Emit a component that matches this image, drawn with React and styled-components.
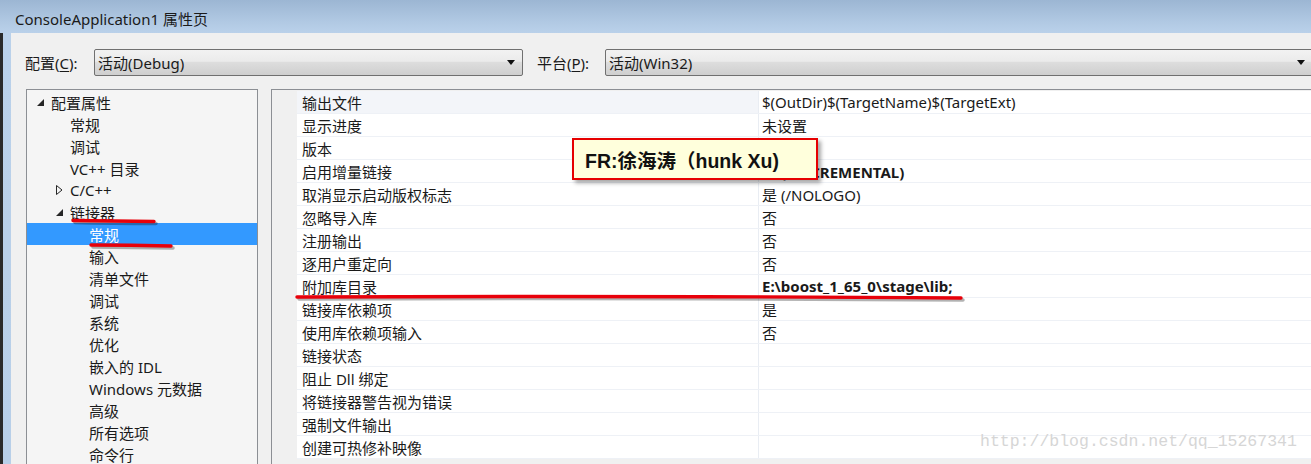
import React from "react";
import styled, { createGlobalStyle } from "styled-components";

const GlobalStyle = createGlobalStyle`
  html, body {
    margin: 0;
    padding: 0;
    background: #f0f0f0;
    overflow: hidden;
  }
  body {
    font-family: "Noto Sans", "Noto Sans CJK SC", sans-serif;
    font-size: 15px;
    color: #1a1a1a;
  }
`;

const treeItems = [
  { label: "配置属性", level: 0, arrow: "open" },
  { label: "常规", level: 1 },
  { label: "调试", level: 1 },
  { label: "VC++ 目录", level: 1 },
  { label: "C/C++", level: 1, arrow: "closed" },
  { label: "链接器", level: 1, arrow: "open" },
  { label: "常规", level: 2, selected: true },
  { label: "输入", level: 2 },
  { label: "清单文件", level: 2 },
  { label: "调试", level: 2 },
  { label: "系统", level: 2 },
  { label: "优化", level: 2 },
  { label: "嵌入的 IDL", level: 2 },
  { label: "Windows 元数据", level: 2 },
  { label: "高级", level: 2 },
  { label: "所有选项", level: 2 },
  { label: "命令行", level: 2 },
];

const props = [
  { name: "输出文件", value: "$(OutDir)$(TargetName)$(TargetExt)", active: true },
  { name: "显示进度", value: "未设置" },
  { name: "版本", value: "" },
  { name: "启用增量链接", value: "是 (/INCREMENTAL)", bold: true },
  { name: "取消显示启动版权标志", value: "是 (/NOLOGO)" },
  { name: "忽略导入库", value: "否" },
  { name: "注册输出", value: "否" },
  { name: "逐用户重定向", value: "否" },
  { name: "附加库目录", value: "E:\\boost_1_65_0\\stage\\lib;", bold: true },
  { name: "链接库依赖项", value: "是" },
  { name: "使用库依赖项输入", value: "否" },
  { name: "链接状态", value: "" },
  { name: "阻止 Dll 绑定", value: "" },
  { name: "将链接器警告视为错误", value: "" },
  { name: "强制文件输出", value: "" },
  { name: "创建可热修补映像", value: "" },
];

const Page = styled.div`
  position: relative;
  width: 1311px;
  height: 464px;
  overflow: hidden;
  display: flex;
  flex-direction: column;
`;

const TitleBar = styled.div`
  height: 33px;
  flex: none;
  display: flex;
  align-items: center;
  padding-left: 15px;
  padding-top: 4px;
  box-sizing: border-box;
  background: linear-gradient(#9cb6d3, #b2cae4 70%, #bad1ea);
  font-size: 15px;
  color: #1a1a1a;
`;

const Frame = styled.div`
  flex: 1;
  display: flex;
  min-height: 0;
`;

const FrameEdge = styled.div`
  width: 8px;
  flex: none;
  border-left: 3px solid #2a2a2a;
  background: linear-gradient(#bad1ea, #b8cfe8);
`;

const Client = styled.div`
  flex: 1;
  background: #f0f0f0;
  display: flex;
  flex-direction: column;
  padding: 16px 0 0 14px;
  min-width: 0;
`;

const ConfigRow = styled.div`
  display: flex;
  align-items: center;
  height: 27px;
`;

const Label = styled.span`
  width: ${(p) => p.$w}px;
  flex: none;
  u {
    text-decoration: underline;
    text-underline-offset: 2px;
  }
`;

const Combo = styled.div`
  width: ${(p) => p.$w}px;
  flex: none;
  height: 27px;
  box-sizing: border-box;
  border: 1px solid #707070;
  border-radius: 2px;
  background: linear-gradient(#f2f2f2, #ebebeb 45%, #dddddd 50%, #cfcfcf);
  display: flex;
  align-items: center;
  padding: 0 7px 0 3px;
  margin-right: ${(p) => p.$mr || 0}px;
`;

const ComboText = styled.span`
  flex: 1;
`;

const Arrow = styled.span`
  width: 0;
  height: 0;
  border-left: 4px solid transparent;
  border-right: 4px solid transparent;
  border-top: 5px solid #111;
`;

const Panels = styled.div`
  display: flex;
  gap: 13px;
  margin-top: 13px;
  margin-left: 1px;
  flex: 1;
  min-height: 0;
`;

const Tree = styled.div`
  width: 232px;
  flex: none;
  box-sizing: border-box;
  border: 1px solid #8c8f94;
  border-bottom: none;
  background: #f5f5f5;
  padding-top: 1px;
`;

const TreeRow = styled.div`
  height: 22px;
  display: flex;
  align-items: center;
  padding-left: ${(p) => 10 + p.$level * 19}px;
  background: ${(p) => (p.$selected ? "#3399ff" : "transparent")};
  color: ${(p) => (p.$selected ? "#fff" : "#1a1a1a")};
`;

const Expander = styled.span`
  width: 14px;
  flex: none;
  display: flex;
  align-items: center;
`;

const Grid = styled.div`
  flex: 1;
  min-width: 0;
  box-sizing: border-box;
  border: 1px solid #8c8f94;
  border-bottom: none;
  border-right: none;
  background: #f0f0f0;
  padding-left: 25px;
  padding-top: 1px;
`;

const PropRow = styled.div`
  display: grid;
  grid-template-columns: 462px 1fr;
  height: 23px;
  box-sizing: border-box;
  border-bottom: 1px solid #eef1f6;
  background: #fff;
`;

const NameCell = styled.div`
  padding-left: 5px;
  display: flex;
  align-items: center;
  border-right: 1px solid #e9edf3;
  background: ${(p) => (p.$active ? "#f3f5f9" : "#fff")};
  white-space: nowrap;
`;

const ValueCell = styled.div`
  padding-left: 3px;
  display: flex;
  align-items: center;
  font-weight: ${(p) => (p.$bold ? 700 : 400)};
  white-space: nowrap;
`;

const Note = styled.div`
  position: absolute;
  left: 572px;
  top: 138px;
  width: 246px;
  height: 42px;
  box-sizing: border-box;
  border: 2px solid #e60000;
  background: #ffffdc;
  box-shadow: 3px 3px 4px rgba(0, 0, 0, 0.35);
  display: flex;
  align-items: center;
  padding-left: 11px;
  font-family: "Liberation Sans", "Noto Sans CJK SC", sans-serif;
  font-weight: 700;
  font-size: 19.5px;
  color: #111;
  white-space: nowrap;
`;

const Ink = styled.svg`
  position: absolute;
  left: 0;
  top: 0;
  pointer-events: none;
`;

const Watermark = styled.div`
  position: absolute;
  left: 980px;
  top: 432px;
  font-family: "Liberation Mono", monospace;
  font-size: 16.5px;
  color: #d6d6d6;
`;

const OpenGlyph = () => (
  <svg width="7" height="7" viewBox="0 0 7 7">
    <polygon points="7,0 7,7 0,7" fill="#262626" />
  </svg>
);

const ClosedGlyph = () => (
  <svg width="7" height="10" viewBox="0 0 7 10">
    <polygon points="0.5,0.5 6,5 0.5,9.5" fill="none" stroke="#262626" strokeWidth="1" />
  </svg>
);

const App = () => {
  return (
    <>
      <GlobalStyle />
      <Page>
        <TitleBar>ConsoleApplication1 属性页</TitleBar>
        <Frame>
          <FrameEdge />
          <Client>
            <ConfigRow>
              <Label $w={69}>
                配置(<u>C</u>):
              </Label>
              <Combo $w={429} $mr={14}>
                <ComboText>活动(Debug)</ComboText>
                <Arrow />
              </Combo>
              <Label $w={68}>
                平台(<u>P</u>):
              </Label>
              <Combo $w={708}>
                <ComboText>活动(Win32)</ComboText>
                <Arrow />
              </Combo>
            </ConfigRow>
            <Panels>
              <Tree>
                {treeItems.map((item, i) => (
                  <TreeRow key={i} $level={item.level} $selected={item.selected}>
                    <Expander>
                      {item.arrow === "open" && <OpenGlyph />}
                      {item.arrow === "closed" && <ClosedGlyph />}
                    </Expander>
                    {item.label}
                  </TreeRow>
                ))}
              </Tree>
              <Grid>
                {props.map((p, i) => (
                  <PropRow key={i}>
                    <NameCell $active={p.active}>{p.name}</NameCell>
                    <ValueCell $bold={p.bold}>{p.value}</ValueCell>
                  </PropRow>
                ))}
              </Grid>
            </Panels>
          </Client>
        </Frame>

        <Note>FR:徐海涛（hunk Xu)</Note>

        <Ink width="1311" height="464" viewBox="0 0 1311 464">
          <g fill="none" strokeLinecap="round">
            <path d="M75 222.5 Q110 223.5 156 223.5" stroke="rgba(0,0,0,0.3)" strokeWidth="3.5" />
            <path d="M73 220.5 Q110 221 154 221.5" stroke="#e8000a" strokeWidth="3.4" />
            <path d="M93 247 Q130 247.5 173 248" stroke="rgba(0,0,0,0.3)" strokeWidth="3.5" />
            <path d="M91 245 Q130 245 171 246" stroke="#e8000a" strokeWidth="3.4" />
            <path d="M299 299 Q600 297.5 963 300" stroke="rgba(0,0,0,0.3)" strokeWidth="3.5" />
            <path d="M297 297 Q600 295.5 961 298" stroke="#e8000a" strokeWidth="3.4" />
          </g>
        </Ink>

        <Watermark>http://blog.csdn.net/qq_15267341</Watermark>
      </Page>
    </>
  );
};

export default App;
